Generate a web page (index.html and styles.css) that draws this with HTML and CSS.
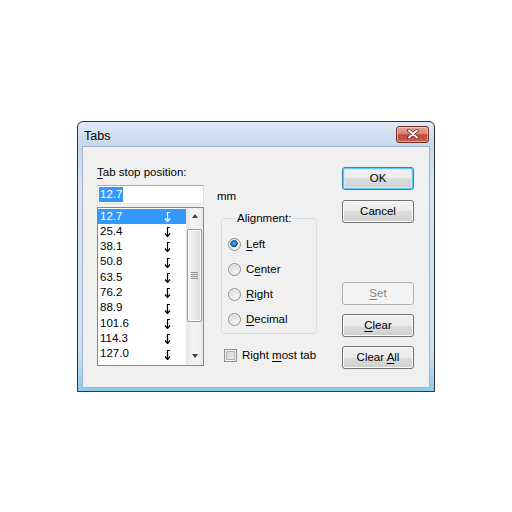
FILE: index.html
```html
<!DOCTYPE html>
<html lang="en">
<head>
  <meta charset="UTF-8" />
  <title>Tabs</title>
  <link rel="stylesheet" href="styles.css">
</head>
<body>
  <div class="window">
    <div class="titlebar">
      <span class="title">Tabs</span>
      <button class="close" aria-label="Close">
        <svg width="12" height="10" viewBox="0 0 12 10">
          <path d="M2 1.5L10 8.5M10 1.5L2 8.5" stroke="#5a2b26" stroke-width="3.6" stroke-linecap="round"/>
          <path d="M2 1.5L10 8.5M10 1.5L2 8.5" stroke="#fff" stroke-width="2" stroke-linecap="round"/>
        </svg>
      </button>
    </div>

    <div class="client">
      <div class="left">
        <label class="field-label"><u>T</u>ab stop position:</label>
        <div class="edit-row">
          <div class="edit"><span class="selected">12.7</span></div>
          <span class="unit">mm</span>
        </div>

        <div class="lower">
          <div class="listbox">
            <ul class="items" id="items"></ul>
            <div class="scrollbar">
              <div class="arrow"><span class="tri up"></span></div>
              <div class="track">
                <div class="thumb"><span class="grip"></span></div>
              </div>
              <div class="arrow"><span class="tri down"></span></div>
            </div>
          </div>

          <div class="options">
            <fieldset class="group">
              <legend>Alignment:</legend>
              <div class="radios">
                <label class="radio-row"><span class="radio checked"></span><span><u>L</u>eft</span></label>
                <label class="radio-row"><span class="radio"></span><span>C<u>e</u>nter</span></label>
                <label class="radio-row"><span class="radio"></span><span><u>R</u>ight</span></label>
                <label class="radio-row"><span class="radio"></span><span><u>D</u>ecimal</span></label>
              </div>
            </fieldset>
            <label class="check-row"><span class="checkbox"></span><span>Right <u>m</u>ost tab</span></label>
          </div>
        </div>
      </div>

      <div class="buttons">
        <button class="btn default">OK</button>
        <button class="btn cancel">Cancel</button>
        <button class="btn set" disabled><u>S</u>et</button>
        <button class="btn clear"><u>C</u>lear</button>
        <button class="btn clear-all">Clear <u>A</u>ll</button>
      </div>
    </div>
  </div>

  <script>
    const stops = ["12.7", "25.4", "38.1", "50.8", "63.5", "76.2", "88.9", "101.6", "114.3", "127.0"];
    const list = document.getElementById('items');

    // left-tab marker drawn next to each stop
    const marker = '<svg class="mark" width="7" height="11" viewBox="0 0 7 11">' +
      '<path d="M3.5 1V9.5M3.5 1.5H6" stroke="currentColor" stroke-width="1.2"/>' +
      '<path d="M1 7.5L3.5 10.5L6 7.5" fill="none" stroke="currentColor" stroke-width="1.2"/></svg>';

    stops.forEach((value, index) => {
      const li = document.createElement('li');
      if (index === 0) li.className = 'sel';
      li.innerHTML = `<span>${value}</span>${marker}`;
      list.appendChild(li);
    });
  </script>
</body>
</html>
```

FILE: styles.css
```css
* {
  margin: 0;
  padding: 0;
  box-sizing: border-box;
}

body {
  width: 512px;
  height: 512px;
  display: flex;
  align-items: center;
  justify-content: center;
  background: #fff;
  font-family: "Liberation Sans", Arial, sans-serif;
  font-size: 11.5px;
  color: #000;
}

u {
  text-decoration-thickness: 1px;
  text-underline-offset: 2px;
}

/* Window frame */
.window {
  width: 358px;
  border: 1px solid #30353b;
  border-radius: 6px 6px 0 0;
  background: linear-gradient(#dfe9f6, #c6d8ed 24px, #d6e4f3 60px, #d2e2f2 85%, #8ccbea);
  padding: 0 4px 3px;
}

.titlebar {
  height: 24px;
  display: flex;
  justify-content: space-between;
  align-items: flex-start;
  padding-left: 2px;
}

.title {
  font-size: 12.5px;
  line-height: 13px;
  margin-top: 8px;
  color: #000;
}

.close {
  width: 33px;
  height: 17px;
  margin: 4px 1px 0 0;
  border: 1px solid #6e2e26;
  border-radius: 3px;
  background: linear-gradient(#e7a99c, #d58475 45%, #c44b3a 52%, #c95a48);
  box-shadow: inset 0 0 0 1px rgba(255, 220, 210, 0.55);
  display: flex;
  align-items: center;
  justify-content: center;
}

/* Client area */
.client {
  height: 242px;
  border: 1px solid #a2b3c8;
  background: #f0f0f0;
  display: flex;
  justify-content: space-between;
  padding: 19px 15px 0 14px;
}

.left {
  width: 220px;
}

.field-label {
  display: block;
  line-height: 13px;
}

.edit-row {
  display: flex;
  align-items: center;
  margin-top: 6px;
}

.edit {
  width: 107px;
  height: 19px;
  background: #fff;
  border: 1px solid;
  border-color: #abadb3 #dbdfe6 #e3e9ef #e2e3ea;
  padding: 1px 1px;
}

.selected {
  display: inline-block;
  background: #3399ff;
  color: #fff;
  line-height: 15px;
  padding: 0 1px;
}

.unit {
  margin-left: 13px;
  padding-top: 3px;
}

.lower {
  display: flex;
  align-items: flex-start;
  margin-top: 3px;
}

/* List box */
.listbox {
  width: 107px;
  height: 159px;
  border: 1px solid #828790;
  background: #fff;
  display: flex;
}

.items {
  flex: 1;
  list-style: none;
  padding-top: 1px;
}

.items li {
  height: 15.33px;
  line-height: 15.33px;
  display: flex;
  align-items: center;
  justify-content: space-between;
  padding: 0 15px 0 2px;
}

.items li.sel {
  background: #3399ff;
  color: #fff;
}

.mark {
  display: block;
}

.scrollbar {
  width: 17px;
  display: flex;
  flex-direction: column;
  background: linear-gradient(to right, #e4e4e4, #f2f2f2 30%, #f2f2f2 70%, #e8e8e8);
}

.arrow {
  height: 17px;
  display: flex;
  align-items: center;
  justify-content: center;
}

.tri {
  width: 0;
  height: 0;
  border-left: 3.5px solid transparent;
  border-right: 3.5px solid transparent;
}

.tri.up {
  border-bottom: 4px solid #404040;
}

.tri.down {
  border-top: 4px solid #404040;
}

.track {
  flex: 1;
  padding: 4px 1px 0;
}

.thumb {
  height: 93px;
  border: 1px solid #979797;
  border-radius: 2px;
  background: linear-gradient(to right, #f4f4f4, #e9e9e9 50%, #d9d9d9);
  box-shadow: inset 0 0 0 1px #fbfbfb;
  display: flex;
  align-items: center;
  justify-content: center;
}

.grip {
  width: 7px;
  height: 7px;
  background: repeating-linear-gradient(#8e8e8e 0 1px, transparent 1px 2px);
}

/* Alignment group */
.options {
  margin-left: 17px;
}

.group {
  width: 96px;
  height: 122px;
  margin-top: 5px;
  border: 1px solid #d5dfe5;
  border-radius: 3px;
  padding: 0 0 0 6px;
}

.group legend {
  margin-left: 8px;
  padding: 0 1px;
  line-height: 13px;
}

.radios {
  padding-top: 7px;
}

.radio-row {
  height: 25px;
  display: flex;
  align-items: center;
  gap: 5px;
}

.radio {
  width: 13px;
  height: 13px;
  border: 1px solid #8e8f8f;
  border-radius: 50%;
  background: radial-gradient(circle at 60% 65%, #f7f7f7, #d8d8d8 70%, #cfcfcf);
  box-shadow: inset 0 0 0 1px #f4f4f4;
}

.radio.checked {
  background: radial-gradient(circle at 45% 40%, #7fd0f5 0, #2a86c9 1.5px, #1b5b93 3.5px, #e3e3e3 4px, #f6f6f6 6px);
}

.check-row {
  display: flex;
  align-items: center;
  gap: 5px;
  margin: 15px 0 0 3px;
  height: 13px;
}

.checkbox {
  width: 13px;
  height: 13px;
  border: 1px solid #8e8f8f;
  background: linear-gradient(135deg, #cfcfcf, #f4f4f4);
  box-shadow: inset 0 0 0 1px #f4f4f4, inset 0 0 0 2px #aeb3b9;
}

/* Command buttons */
.buttons {
  width: 72px;
  display: flex;
  flex-direction: column;
  padding-top: 1px;
}

.btn {
  height: 23px;
  font: inherit;
  color: #000;
  border: 1px solid #707070;
  border-radius: 3px;
  background: linear-gradient(#f2f2f2, #ebebeb 50%, #dddddd 50%, #cfcfcf);
  box-shadow: inset 0 0 0 1px #fcfcfc;
}

.btn.default {
  border-color: #3c7fb1;
  box-shadow: inset 0 0 0 1px #5cc9f5, inset 0 0 0 2px #c9ecfb;
}

.btn.cancel {
  margin-top: 10px;
}

.btn.set {
  margin-top: 59px;
  border-color: #adb2b5;
  background: #f4f4f4;
  color: #838383;
  box-shadow: none;
}

.btn.clear,
.btn.clear-all {
  margin-top: 9px;
}
```
